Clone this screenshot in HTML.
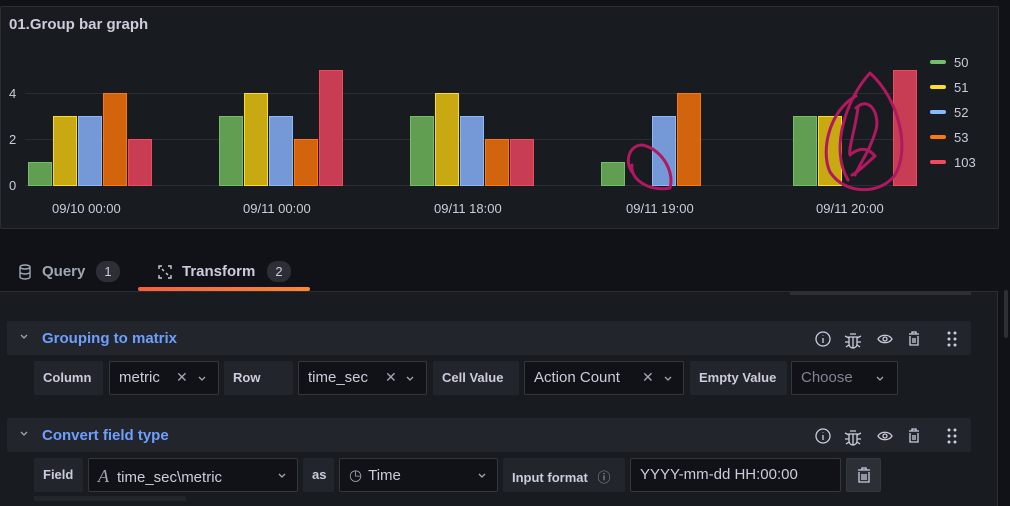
<!DOCTYPE html>
<html><head><style>
*{box-sizing:border-box;margin:0;padding:0}
body{width:1010px;height:501px;background:#111217;font-family:"Liberation Sans",sans-serif;color:#ccccdc;position:relative;overflow:hidden;font-size:14px}
.abs{position:absolute}
.panel{left:0;top:6px;width:999px;height:223px;background:#181b1f;border:1px solid #2a2d33;border-radius:2px}
.hdr{position:absolute;left:7px;width:964px;height:34px;background:#22252b;border-radius:2px}
.hdr .t{position:absolute;left:35px;top:9px;color:#6e9fff;font-size:15px;font-weight:600}
.hdr svg{position:absolute;left:13px;top:13px}
.f{position:absolute;height:34px;background:#22252b;font-size:13px;color:#ccccdc;padding:9px 9px;border-radius:2px;font-weight:600}
.in{position:absolute;height:34px;background:#111217;border:1px solid #34373d;border-radius:2px;font-size:15px;color:#ccccdc;padding:7px 9px}
.x{position:absolute;top:7px;color:#9fa7b3;font-size:14px}
.cv{position:absolute;top:14px}
</style></head><body>
<div class="abs panel"></div>
<div class="abs" style="left:9px;top:16px;font-size:15px;color:#ccccdc;font-weight:600">01.Group bar graph</div>
<svg class="abs" style="left:0;top:0" width="1010" height="230">
<g stroke="#2a2d33" stroke-width="1"><line x1="25" y1="93.5" x2="915" y2="93.5"/><line x1="25" y1="139.5" x2="915" y2="139.5"/><line x1="25" y1="185.5" x2="915" y2="185.5"/></g>
<g font-family="Liberation Sans" font-size="13" fill="#ccccdc"><text x="9" y="98">4</text><text x="9" y="144">2</text><text x="9" y="190">0</text>
<text x="52" y="213">09/10 00:00</text><text x="243" y="213">09/11 00:00</text><text x="434" y="213">09/11 18:00</text><text x="626" y="213">09/11 19:00</text><text x="816" y="213">09/11 20:00</text>
<text x="954" y="67">50</text><text x="954" y="92">51</text><text x="954" y="117">52</text><text x="954" y="142">53</text><text x="954" y="167">103</text></g>
<g stroke-linecap="round" stroke-width="4"><line x1="932" y1="62" x2="944" y2="62" stroke="#73bf69"/><line x1="932" y1="87" x2="944" y2="87" stroke="#fade2a"/><line x1="932" y1="112" x2="944" y2="112" stroke="#8ab8ff"/><line x1="932" y1="137" x2="944" y2="137" stroke="#ff780a"/><line x1="932" y1="162" x2="944" y2="162" stroke="#f2495c"/></g>
<g stroke-width="1">
<g fill="#629e51" stroke="#73bf69"><rect x="28.5" y="162.5" width="23" height="23"/><rect x="219.5" y="116.5" width="23" height="69"/><rect x="410.5" y="116.5" width="23" height="69"/><rect x="601.5" y="162.5" width="23" height="23"/><rect x="793.5" y="116.5" width="23" height="69"/></g>
<g fill="#c8a912" stroke="#fade2a"><rect x="53.5" y="116.5" width="23" height="69"/><rect x="244.5" y="93.5" width="23" height="92"/><rect x="435.5" y="93.5" width="23" height="92"/><rect x="818.5" y="116.5" width="23" height="69"/></g>
<g fill="#7598d6" stroke="#8ab8ff"><rect x="78.5" y="116.5" width="23" height="69"/><rect x="269.5" y="116.5" width="23" height="69"/><rect x="460.5" y="116.5" width="23" height="69"/><rect x="652.5" y="116.5" width="23" height="69"/></g>
<g fill="#d2640d" stroke="#ff780a"><rect x="103.5" y="93.5" width="23" height="92"/><rect x="294.5" y="139.5" width="23" height="46"/><rect x="485.5" y="139.5" width="23" height="46"/><rect x="677.5" y="93.5" width="23" height="92"/></g>
<g fill="#c83d54" stroke="#f2495c"><rect x="128.5" y="139.5" width="23" height="46"/><rect x="319.5" y="70.5" width="23" height="115"/><rect x="510.5" y="139.5" width="23" height="46"/><rect x="893.5" y="70.5" width="23" height="115"/></g>
</g>
<g fill="none" stroke="#b0185f" stroke-width="3" stroke-linecap="round" stroke-linejoin="round">
<path d="M632 172 C624 160 630 145 642 145 C660 148 675 170 670 188 C650 192 630 180 632 165"/>
<path d="M856 96 C830 110 820 150 830 172 C845 195 880 195 895 175 C910 150 900 100 870 73 C845 100 830 150 848 180"/>
<path d="M856 108 C870 95 880 115 876 130 C870 150 862 160 855 175 M858 108 C855 130 848 150 850 155 C862 145 870 150 875 156 C865 165 858 172 852 175"/>
</g>
<rect x="388" y="235" width="220" height="5" rx="2.5" fill="#2c2f35"/>
</svg>
<svg class="abs" style="left:18px;top:264px" width="14" height="16" viewBox="0 0 14 16" fill="none" stroke="#9fa7b3" stroke-width="1.4"><ellipse cx="7" cy="3" rx="5" ry="2"/><path d="M2 3v10c0 1 2.2 2 5 2s5-1 5-2V3M2 8c0 1 2.2 2 5 2s5-1 5-2"/></svg>
<div class="abs" style="left:42px;top:263px;font-size:15px;color:#9fa7b3;font-weight:600">Query</div>
<div class="abs" style="left:96px;top:261px;width:24px;height:21px;border-radius:10px;background:#2c2f35;color:#ccccdc;font-size:13px;text-align:center;line-height:21px">1</div>
<svg class="abs" style="left:157px;top:264px" width="16" height="16" viewBox="0 0 16 16" fill="none" stroke="#ccccdc" stroke-width="1.4"><path d="M2 5V2h3M11 2h3v3M14 11v3h-3M5 14H2v-3M5 5l2 2M11 11l-2-2"/></svg>
<div class="abs" style="left:182px;top:263px;font-size:15px;color:#ccccdc;font-weight:600">Transform</div>
<div class="abs" style="left:267px;top:261px;width:24px;height:21px;border-radius:10px;background:#2c2f35;color:#ccccdc;font-size:13px;text-align:center;line-height:21px">2</div>
<div class="abs" style="left:138px;top:287px;width:172px;height:4px;border-radius:2px;background:linear-gradient(90deg,#f55f3e,#ff8833)"></div>
<div class="abs" style="left:0;top:291px;width:998px;height:215px;background:#181b1f;border-top:1px solid #2a2d33;border-right:1px solid #2a2d33"></div>
<div class="abs" style="left:790px;top:292px;width:181px;height:3px;background:#2c2f35"></div>
<div class="abs" style="left:1004px;top:290px;width:4px;height:48px;background:#2c2f35;border-radius:2px"></div>

<div class="hdr" style="top:321px"><svg width="8" height="6" fill="none" stroke="#9fa7b3" stroke-width="1.3"><path d="M1 1l3 3 3-3"/></svg><span class="t">Grouping to matrix</span></div>
<div class="hdr" style="top:418px"><svg width="8" height="6" fill="none" stroke="#9fa7b3" stroke-width="1.3"><path d="M1 1l3 3 3-3"/></svg><span class="t">Convert field type</span></div>
<svg class="abs" style="left:812px;top:328px" width="160" height="120" fill="none" stroke="#ccccdc" stroke-width="1.3">
<g id="ic"><circle cx="11" cy="11" r="7"/><path d="M11 10v5M11 7.5v.5"/>
<path d="M38 6h6M37 9h8v7a4 4 0 0 1-8 0zM37 10l-4-2M45 10l4-2M37 14h-4M45 14h4M37 17l-3 2M45 17l3 2M41 9v11"/>
<path d="M66 11c3-5 11-5 14 0c-3 5-11 5-14 0z"/><circle cx="73" cy="11" r="2"/>
<path d="M97 6h10M100 6V4h4v2M98 8v9h8V8M101 10v5M103 10v5"/>
<g fill="#ccccdc" stroke="none"><circle cx="137" cy="5" r="1.5"/><circle cx="143" cy="5" r="1.5"/><circle cx="137" cy="11" r="1.5"/><circle cx="143" cy="11" r="1.5"/><circle cx="137" cy="17" r="1.5"/><circle cx="143" cy="17" r="1.5"/></g></g>
<use href="#ic" y="97"/>
</svg>

<div class="f" style="left:34px;top:361px;width:69px">Column</div>
<div class="in" style="left:109px;top:361px;width:110px">metric<span class="x" style="left:66px">✕</span><svg class="cv" style="left:88px" width="8" height="6" fill="none" stroke="#9fa7b3" stroke-width="1.3"><path d="M1 1l3 3 3-3"/></svg></div>
<div class="f" style="left:224px;top:361px;width:69px">Row</div>
<div class="in" style="left:298px;top:361px;width:129px">time_sec<span class="x" style="left:86px">✕</span><svg class="cv" style="left:107px" width="8" height="6" fill="none" stroke="#9fa7b3" stroke-width="1.3"><path d="M1 1l3 3 3-3"/></svg></div>
<div class="f" style="left:433px;top:361px;width:86px">Cell Value</div>
<div class="in" style="left:524px;top:361px;width:160px">Action Count<span class="x" style="left:117px">✕</span><svg class="cv" style="left:139px" width="8" height="6" fill="none" stroke="#9fa7b3" stroke-width="1.3"><path d="M1 1l3 3 3-3"/></svg></div>
<div class="f" style="left:690px;top:361px;width:97px">Empty Value</div>
<div class="in" style="left:791px;top:361px;width:107px;color:#7d8493">Choose<svg class="cv" style="left:84px" width="8" height="6" fill="none" stroke="#9fa7b3" stroke-width="1.3"><path d="M1 1l3 3 3-3"/></svg></div>

<div class="f" style="left:34px;top:458px;width:49px">Field</div>
<div class="in" style="left:88px;top:458px;width:210px"><i style="font-family:'Liberation Serif';font-size:18px;color:#9fa7b3;margin-right:8px">A</i>time_sec\metric<svg class="cv" style="left:189px" width="8" height="6" fill="none" stroke="#9fa7b3" stroke-width="1.3"><path d="M1 1l3 3 3-3"/></svg></div>
<div class="f" style="left:303px;top:458px;width:31px">as</div>
<div class="in" style="left:339px;top:458px;width:159px"><span style="color:#9fa7b3;font-size:15px;margin-right:6px">◷</span>Time<svg class="cv" style="left:138px" width="8" height="6" fill="none" stroke="#9fa7b3" stroke-width="1.3"><path d="M1 1l3 3 3-3"/></svg></div>
<div class="f" style="left:503px;top:458px;width:122px;padding-top:9px">Input format <span style="color:#9fa7b3;margin-left:6px;font-weight:400">ⓘ</span></div>
<div class="in" style="left:630px;top:458px;width:211px">YYYY-mm-dd HH:00:00</div>
<div class="f" style="left:846px;top:458px;width:35px;background:#2c2f35;border:1px solid #34373d"></div>
<svg class="abs" style="left:855px;top:466px" width="18" height="18" fill="none" stroke="#ccccdc" stroke-width="1.3"><path d="M3 4h12M7 4V2h4v2M4 6v10h10V6M7 8v6M9 8v6M11 8v6"/></svg>
<div class="abs" style="left:34px;top:496px;width:152px;height:5px;background:#22252b"></div>
</body></html>
